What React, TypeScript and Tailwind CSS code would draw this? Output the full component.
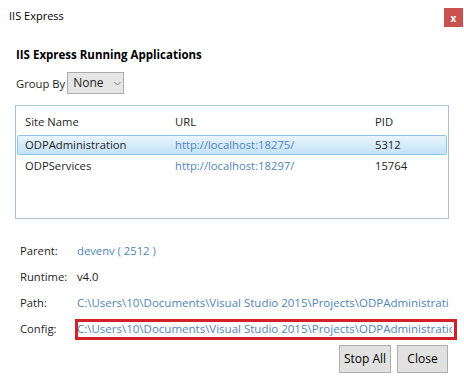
import React from "react";

const link = "text-[#4f86bd]";

export default function App() {
  return (
    <div
      className="w-[464px] h-[382px] bg-white text-[11.25px] text-[#1e1e1e] overflow-hidden relative"
      style={{ fontFamily: '"Open Sans", "Noto Sans", sans-serif' }}
    >
      {/* title bar */}
      <div className="flex justify-between h-[32px]">
        <div className="pl-[9px] pt-[7px] leading-[18px] text-[11px] text-black">IIS Express</div>
        <div className="mt-[8px] mr-[1px] w-[19px] h-[19px] bg-[#c9504f] text-white text-[10px] font-bold flex items-center justify-center leading-none">
          x
        </div>
      </div>

      {/* heading */}
      <div className="pl-[16px] mt-[13px] h-[20px] leading-[20px] text-[11.5px] font-bold text-black">
        IIS Express Running Applications
      </div>

      {/* group by */}
      <div className="flex items-center pl-[16px] mt-[7px] h-[22px]">
        <span className="mt-[3px]">Group By</span>
        <div className="ml-[2px] w-[57px] h-[22px] bg-[#e5e5e5] border border-[#acacac] flex items-center pl-[5px] text-[12px]">
          <span>None</span>
          <svg className="ml-[10px]" width="7" height="5" viewBox="0 0 7 5">
            <path d="M0.5 1 L3.5 4 L6.5 1" fill="none" stroke="#7a7a7a" strokeWidth="1" />
          </svg>
        </div>
      </div>

      {/* list */}
      <div className="ml-[15px] mt-[11px] w-[434px] h-[114px] border border-[#abc2d1] px-[1px]">
        <div className="flex h-[29px] items-center pt-[3px]">
          <div className="w-[158px] pl-[8px]">Site Name</div>
          <div className="w-[200px]">URL</div>
          <div>PID</div>
        </div>
        <div className="flex h-[20px] items-center rounded-[2px] border border-[#8ec5ec] bg-gradient-to-b from-[#eaf5fd] to-[#c3e2f7]">
          <div className="w-[157px] pl-[7px]">ODPAdministration</div>
          <div className={`w-[200px] ${link}`}>http://localhost:18275/</div>
          <div>5312</div>
        </div>
        <div className="flex h-[22px] items-center">
          <div className="w-[158px] pl-[8px]">ODPServices</div>
          <div className={`w-[200px] ${link}`}>http://localhost:18297/</div>
          <div>15764</div>
        </div>
      </div>

      {/* details */}
      <div className="mt-[19px] pl-[20px] flex flex-col">
        <div className="flex h-[26px] items-center">
          <div className="w-[57px]">Parent:</div>
          <div className={link}>devenv ( 2512 )</div>
        </div>
        <div className="flex h-[26px] items-center">
          <div className="w-[57px]">Runtime:</div>
          <div>v4.0</div>
        </div>
        <div className="flex h-[26px] items-center">
          <div className="w-[57px]">Path:</div>
          <div className={`${link} text-[11.5px] whitespace-nowrap overflow-hidden w-[372px]`}>
            C:\Users\10\Documents\Visual Studio 2015\Projects\ODPAdministration
          </div>
        </div>
        <div className="flex h-[26px] items-center">
          <div className="w-[55px]">Config:</div>
          <div className="border-[3px] border-[#d4202a] h-[21px] w-[382px] flex items-center overflow-hidden">
            <div className="w-[374px] overflow-hidden shrink-0">
              <div className={`${link} text-[11.5px] whitespace-nowrap -ml-[1px]`}>
                C:\Users\10\Documents\Visual Studio 2015\Projects\ODPAdministration
              </div>
            </div>
          </div>
        </div>
      </div>

      {/* buttons */}
      <div className="flex justify-end gap-[6px] pr-[16px] mt-[3px]">
        <button className="w-[52px] h-[28px] bg-[#e1e1e1] border border-[#adadad] text-[12px] text-black">
          Stop All
        </button>
        <button className="w-[51px] h-[28px] bg-[#e1e1e1] border border-[#adadad] text-[12px] text-black">
          Close
        </button>
      </div>
    </div>
  );
}
